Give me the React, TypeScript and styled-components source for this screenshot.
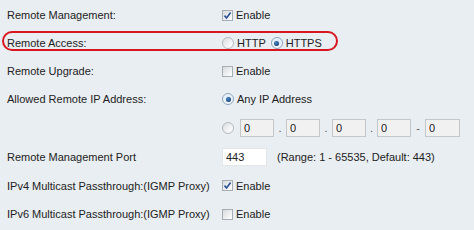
import React from 'react';
import styled, { createGlobalStyle, css } from 'styled-components';

const GlobalStyle = createGlobalStyle`
  html, body {
    margin: 0;
    padding: 0;
    background: #e9eef2;
  }
  body {
    font-family: "Liberation Sans", Arial, sans-serif;
    font-size: 11px;
    color: #222;
  }
`;

const Form = styled.div`
  width: 474px;
  height: 230px;
  padding-top: 1px;
  box-sizing: border-box;
  overflow: hidden;
`;

const Row = styled.div<{ $h?: number; $circled?: boolean }>`
  position: relative;
  display: grid;
  grid-template-columns: 221px 1fr;
  align-items: center;
  height: ${(p) => p.$h || 28}px;

  ${(p) =>
    p.$circled &&
    css`
      &::after {
        content: '';
        position: absolute;
        left: 2px;
        width: 332px;
        top: 2px;
        height: 16px;
        border: 2.5px solid #d8161f;
        border-radius: 12px;
        pointer-events: none;
      }
    `}
`;

const Label = styled.div`
  padding-left: 7px;
  white-space: nowrap;
`;

const Controls = styled.div`
  display: flex;
  align-items: center;
  padding-left: 1px;
  white-space: nowrap;
`;

const Option = styled.span<{ $space?: number }>`
  display: inline-flex;
  align-items: center;
  gap: 3px;
  margin-right: ${(p) => (p.$space ?? 5)}px;
`;

const Box = styled.span`
  display: inline-flex;
  align-items: center;
  justify-content: center;
  width: 11px;
  height: 11px;
  border: 1px solid #a7adb4;
  background: linear-gradient(135deg, #d6d9dc 0%, #f4f5f6 70%, #ffffff 100%);
  box-sizing: border-box;
`;

const Circle = styled.span<{ $on?: boolean }>`
  display: inline-flex;
  align-items: center;
  justify-content: center;
  width: 12px;
  height: 12px;
  border-radius: 50%;
  border: 1px solid ${(p) => (p.$on ? '#8aa2bd' : '#b4b9be')};
  background: ${(p) =>
    p.$on
      ? 'radial-gradient(circle at 50% 45%, #cfe2f5 0%, #f3f7fb 70%)'
      : 'linear-gradient(135deg, #d9dcdf 0%, #f6f7f8 70%, #ffffff 100%)'};
  box-sizing: border-box;

  ${(p) =>
    p.$on &&
    css`
      &::before {
        content: '';
        width: 5px;
        height: 5px;
        border-radius: 50%;
        background: radial-gradient(circle at 40% 35%, #4a86c4 0%, #163f78 80%);
      }
    `}
`;

const Field = styled.input<{ $w: number; $white?: boolean }>`
  width: ${(p) => p.$w}px;
  height: 18px;
  box-sizing: border-box;
  padding: 0 3px;
  margin: 0;
  font-family: "Liberation Sans", Arial, sans-serif;
  font-size: 11px;
  color: #222;
  border: 1px solid ${(p) => (p.$white ? '#e3e6e9' : '#c4c7ca')};
  background: ${(p) => (p.$white ? '#ffffff' : '#f1f1f1')};
  outline: none;
`;

const Sep = styled.span<{ $w: number }>`
  display: inline-block;
  width: ${(p) => p.$w}px;
  text-align: center;
  color: #555;
`;

const Note = styled.span`
  margin-left: 10px;
`;

const Checkbox = ({ checked }: { checked?: boolean }) => (
  <Box>
    {checked && (
      <svg width="9" height="9" viewBox="0 0 9 9">
        <path d="M1.5 4.6 L3.6 7 L7.6 1.6" fill="none" stroke="#2c4f96" strokeWidth="1.6" />
      </svg>
    )}
  </Box>
);

const CheckOption = ({ checked }: { checked?: boolean }) => (
  <Option>
    <Checkbox checked={checked} />
    Enable
  </Option>
);

const App = () => {
  return (
    <>
      <GlobalStyle />
      <Form>
        <Row>
          <Label>Remote Management:</Label>
          <Controls>
            <CheckOption checked />
          </Controls>
        </Row>
        <Row $circled>
          <Label>Remote Access:</Label>
          <Controls>
            <Option>
              <Circle />
              HTTP
            </Option>
            <Option>
              <Circle $on />
              HTTPS
            </Option>
          </Controls>
        </Row>
        <Row>
          <Label>Remote Upgrade:</Label>
          <Controls>
            <CheckOption />
          </Controls>
        </Row>
        <Row>
          <Label>Allowed Remote IP Address:</Label>
          <Controls>
            <Option>
              <Circle $on />
              Any IP Address
            </Option>
          </Controls>
        </Row>
        <Row $h={29}>
          <Label />
          <Controls>
            <Option $space={6}>
              <Circle />
            </Option>
            <Field $w={34} defaultValue="0" />
            <Sep $w={12}>.</Sep>
            <Field $w={34} defaultValue="0" />
            <Sep $w={12}>.</Sep>
            <Field $w={34} defaultValue="0" />
            <Sep $w={11}>.</Sep>
            <Field $w={34} defaultValue="0" />
            <Sep $w={14}>-</Sep>
            <Field $w={35} defaultValue="0" />
          </Controls>
        </Row>
        <Row $h={29}>
          <Label>Remote Management Port</Label>
          <Controls>
            <Field $w={45} $white defaultValue="443" />
            <Note>(Range: 1 - 65535, Default: 443)</Note>
          </Controls>
        </Row>
        <Row $h={29}>
          <Label>IPv4 Multicast Passthrough:(IGMP Proxy)</Label>
          <Controls>
            <CheckOption checked />
          </Controls>
        </Row>
        <Row>
          <Label>IPv6 Multicast Passthrough:(IGMP Proxy)</Label>
          <Controls>
            <CheckOption />
          </Controls>
        </Row>
      </Form>
    </>
  );
};

export default App;
